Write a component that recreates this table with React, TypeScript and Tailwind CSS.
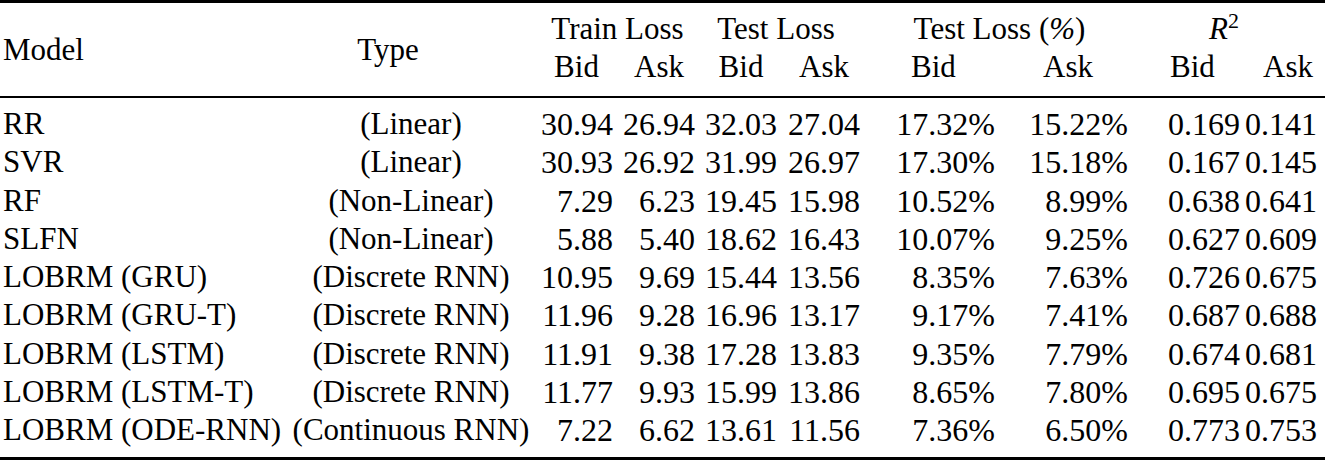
const rows = [
  ["RR", "(Linear)", "30.94", "26.94", "32.03", "27.04", "17.32%", "15.22%", "0.169", "0.141"],
  ["SVR", "(Linear)", "30.93", "26.92", "31.99", "26.97", "17.30%", "15.18%", "0.167", "0.145"],
  ["RF", "(Non-Linear)", "7.29", "6.23", "19.45", "15.98", "10.52%", "8.99%", "0.638", "0.641"],
  ["SLFN", "(Non-Linear)", "5.88", "5.40", "18.62", "16.43", "10.07%", "9.25%", "0.627", "0.609"],
  ["LOBRM (GRU)", "(Discrete RNN)", "10.95", "9.69", "15.44", "13.56", "8.35%", "7.63%", "0.726", "0.675"],
  ["LOBRM (GRU-T)", "(Discrete RNN)", "11.96", "9.28", "16.96", "13.17", "9.17%", "7.41%", "0.687", "0.688"],
  ["LOBRM (LSTM)", "(Discrete RNN)", "11.91", "9.38", "17.28", "13.83", "9.35%", "7.79%", "0.674", "0.681"],
  ["LOBRM (LSTM-T)", "(Discrete RNN)", "11.77", "9.93", "15.99", "13.86", "8.65%", "7.80%", "0.695", "0.675"],
  ["LOBRM (ODE-RNN)", "(Continuous RNN)", "7.22", "6.62", "13.61", "11.56", "7.36%", "6.50%", "0.773", "0.753"],
];

// right padding for the numeric columns so the figures line up like the LaTeX table
const numPad = ["pr-[5px]", "pr-[5px]", "pr-[5px]", "pr-[6px]", "pr-[5px]", "pr-[5px]", "pr-[4px]", "pr-[8px]"];

const grid = "grid grid-cols-[292px_238px_88px_82px_82px_84px_134px_133px_111px_81px]";

export default function App() {
  return (
    <div className="w-[1325px] h-[461px] bg-white text-black text-[31px] overflow-hidden font-['Liberation_Serif','Times_New_Roman',serif]">
      <div className="h-[3px] bg-black" />

      {/* header */}
      <div className={`${grid} pt-[7px] leading-[38px]`}>
        <div className="row-span-2 flex items-center pl-[3px] pt-[4px]">Model</div>
        <div className="row-span-2 flex items-center justify-center pr-[46px] pt-[4px]">Type</div>
        <div className="col-span-2 text-center pl-[5px]">Train Loss</div>
        <div className="col-span-2 text-center pr-[14px]">Test Loss</div>
        <div className="col-span-2 text-center">
          Test Loss (<span className="italic">%</span>)
        </div>
        <div className="col-span-2 text-center pr-[10px]">
          <span className="italic">R</span>
          <sup className="text-[22px] not-italic">2</sup>
        </div>

        <div className="text-center pl-[5px]">Bid</div>
        <div className="text-center">Ask</div>
        <div className="text-center">Bid</div>
        <div className="text-center">Ask</div>
        <div className="pl-[45px]">Bid</div>
        <div className="pl-[43px]">Ask</div>
        <div className="pl-[37px]">Bid</div>
        <div className="pl-[19px]">Ask</div>
      </div>

      <div className="mt-[10px] h-[2px] bg-black" />

      {/* body */}
      <div className="pt-[7px]">
        {rows.map((r) => (
          <div key={r[0]} className={`${grid} h-[38.25px] leading-[38.25px]`}>
            <div className="pl-[3px] whitespace-nowrap">{r[0]}</div>
            <div className="text-center whitespace-nowrap">{r[1]}</div>
            {r.slice(2).map((v, i) => (
              <div key={i} className={`text-right text-[32px] whitespace-nowrap ${numPad[i]}`}>
                {v}
              </div>
            ))}
          </div>
        ))}
      </div>

      <div className="mt-[8px] h-[3px] bg-black" />
    </div>
  );
}
